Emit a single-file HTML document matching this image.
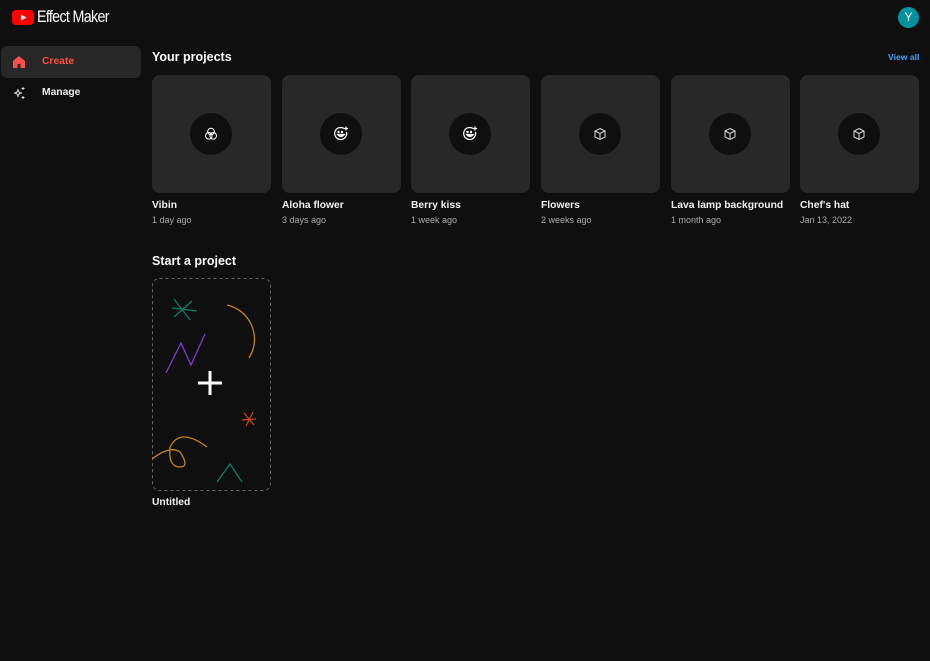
<!DOCTYPE html>
<html><head><style>
*{margin:0;padding:0;box-sizing:border-box}
body{width:930px;height:661px;background:#0f0f0f;font-family:"Liberation Sans",sans-serif;color:#fff;position:relative;overflow:hidden}
.abs{position:absolute}
.card{position:absolute;top:75px;width:119px;height:118px;background:#282828;border-radius:8px}
.card .c{position:absolute;left:38px;top:38px;width:42px;height:42px;border-radius:50%;background:#0f0f0f;display:flex;align-items:center;justify-content:center}
.t{position:absolute;top:200px;font-size:10.3px;font-weight:bold;color:#f1f1f1}
.s{position:absolute;top:215px;font-size:9px;color:#aaa}
</style></head><body>
<div class="abs" style="left:12px;top:10px;width:22px;height:15px;background:#f00;border-radius:4px"></div>
<svg class="abs" style="left:12px;top:10px" width="22" height="15"><path d="M9 4.5L14.5 7.5L9 10.5Z" fill="#fff"/></svg>
<div class="abs" style="left:37px;top:7px;font-size:17px;letter-spacing:-0.8px;color:#fff;transform:scaleX(0.84);transform-origin:left">Effect Maker</div>
<div class="abs" style="left:898px;top:7px;width:21px;height:21px;border-radius:50%;background:#00939e;font-size:12px;text-align:center;line-height:21px">Y</div>

<div class="abs" style="left:1px;top:46px;width:140px;height:32px;background:#272727;border-radius:6px"></div>
<svg class="abs" style="left:12px;top:55px" width="14" height="14"><path d="M1 6L7 1L13 6V13H1Z" fill="#ff4e45"/><rect x="5.5" y="9" width="3" height="4" fill="#272727"/></svg>
<div class="abs" style="left:42px;top:56px;font-size:10.3px;color:#ff4e45;font-weight:bold">Create</div>
<svg class="abs" style="left:12px;top:86px" width="14" height="14" fill="none" stroke="#ddd" stroke-width="1"><path d="M6 3Q6 7 2 7Q6 7 6 11Q6 7 10 7Q6 7 6 3Z"/><path d="M11 1V4M9.5 2.5H12.5M11 10V13M9.5 11.5H12.5"/></svg>
<div class="abs" style="left:42px;top:87px;font-size:10.3px;color:#eee;font-weight:bold">Manage</div>

<div class="abs" style="left:152px;top:50px;font-size:12.5px;font-weight:bold">Your projects</div>
<div class="abs" style="left:888px;top:52px;font-size:8.6px;font-weight:bold;color:#3ea6ff">View all</div>

<div class="card" style="left:152px"><div class="c"><svg width="16" height="16" fill="none" stroke="#fff" stroke-width="1"><circle cx="8" cy="5.5" r="3.3"/><circle cx="5.8" cy="9.8" r="3.3"/><circle cx="10.2" cy="9.8" r="3.3"/></svg></div></div>
<div class="card" style="left:282px"><div class="c"><svg width="16" height="16" fill="none" stroke="#fff" stroke-width="1.2"><path d="M11 2.5A6 6 0 1 0 13.5 6"/><path d="M4.5 8.5Q8 12.5 11.5 8.5Z" fill="#fff"/><circle cx="5.5" cy="6" r=".6" fill="#fff"/><circle cx="9" cy="6" r=".6" fill="#fff"/><path d="M13 0.5V4.5M11 2.5H15"/></svg></div></div>
<div class="card" style="left:411px"><div class="c"><svg width="16" height="16" fill="none" stroke="#fff" stroke-width="1.2"><path d="M11 2.5A6 6 0 1 0 13.5 6"/><path d="M4.5 8.5Q8 12.5 11.5 8.5Z" fill="#fff"/><circle cx="5.5" cy="6" r=".6" fill="#fff"/><circle cx="9" cy="6" r=".6" fill="#fff"/><path d="M13 0.5V4.5M11 2.5H15"/></svg></div></div>
<div class="card" style="left:541px"><div class="c"><svg width="14" height="14" fill="none" stroke="#ddd" stroke-width="1"><path d="M7 1.5L12 4V10L7 12.5L2 10V4Z M2 4L7 6.5L12 4 M7 6.5V12.5"/></svg></div></div>
<div class="card" style="left:671px"><div class="c"><svg width="14" height="14" fill="none" stroke="#ddd" stroke-width="1"><path d="M7 1.5L12 4V10L7 12.5L2 10V4Z M2 4L7 6.5L12 4 M7 6.5V12.5"/></svg></div></div>
<div class="card" style="left:800px"><div class="c"><svg width="14" height="14" fill="none" stroke="#ddd" stroke-width="1"><path d="M7 1.5L12 4V10L7 12.5L2 10V4Z M2 4L7 6.5L12 4 M7 6.5V12.5"/></svg></div></div>

<div class="t" style="left:152px">Vibin</div><div class="s" style="left:152px">1 day ago</div>
<div class="t" style="left:282px">Aloha flower</div><div class="s" style="left:282px">3 days ago</div>
<div class="t" style="left:411px">Berry kiss</div><div class="s" style="left:411px">1 week ago</div>
<div class="t" style="left:541px">Flowers</div><div class="s" style="left:541px">2 weeks ago</div>
<div class="t" style="left:671px">Lava lamp background</div><div class="s" style="left:671px">1 month ago</div>
<div class="t" style="left:800px">Chef's hat</div><div class="s" style="left:800px">Jan 13, 2022</div>

<div class="abs" style="left:152px;top:254px;font-size:12.5px;font-weight:bold">Start a project</div>
<svg class="abs" style="left:150px;top:277px" width="124" height="216" fill="none">
<rect x="2.5" y="1.5" width="118" height="212" rx="7" stroke="#666" stroke-dasharray="3 3"/>
<g stroke="#0f7a63" stroke-width="1.3"><path d="M24 22L40 43M42 24L24 40M22 31L47 34"/><path d="M67 205L80 187L92 205"/></g>
<path d="M77 28A35 35 0 0 1 99 81" stroke="#c38510" stroke-width="1.3"/>
<path d="M16 96L31 66L41 88L55 57" stroke="#7a3fd0" stroke-width="1.3"/>
<path d="M48 106H72M60 94V118" stroke="#fff" stroke-width="3"/>
<path d="M94 136L104 148M103 135L96 149M92 143L106 142" stroke="#c84a10" stroke-width="1.2"/>
<path d="M2 182Q20 168 30 175Q40 190 30 190Q18 190 20 170Q30 150 57 170" stroke="#c38510" stroke-width="1.3"/>
</svg>
<div class="abs" style="left:152px;top:497px;font-size:10.3px;font-weight:bold;color:#f1f1f1">Untitled</div>
</body></html>
